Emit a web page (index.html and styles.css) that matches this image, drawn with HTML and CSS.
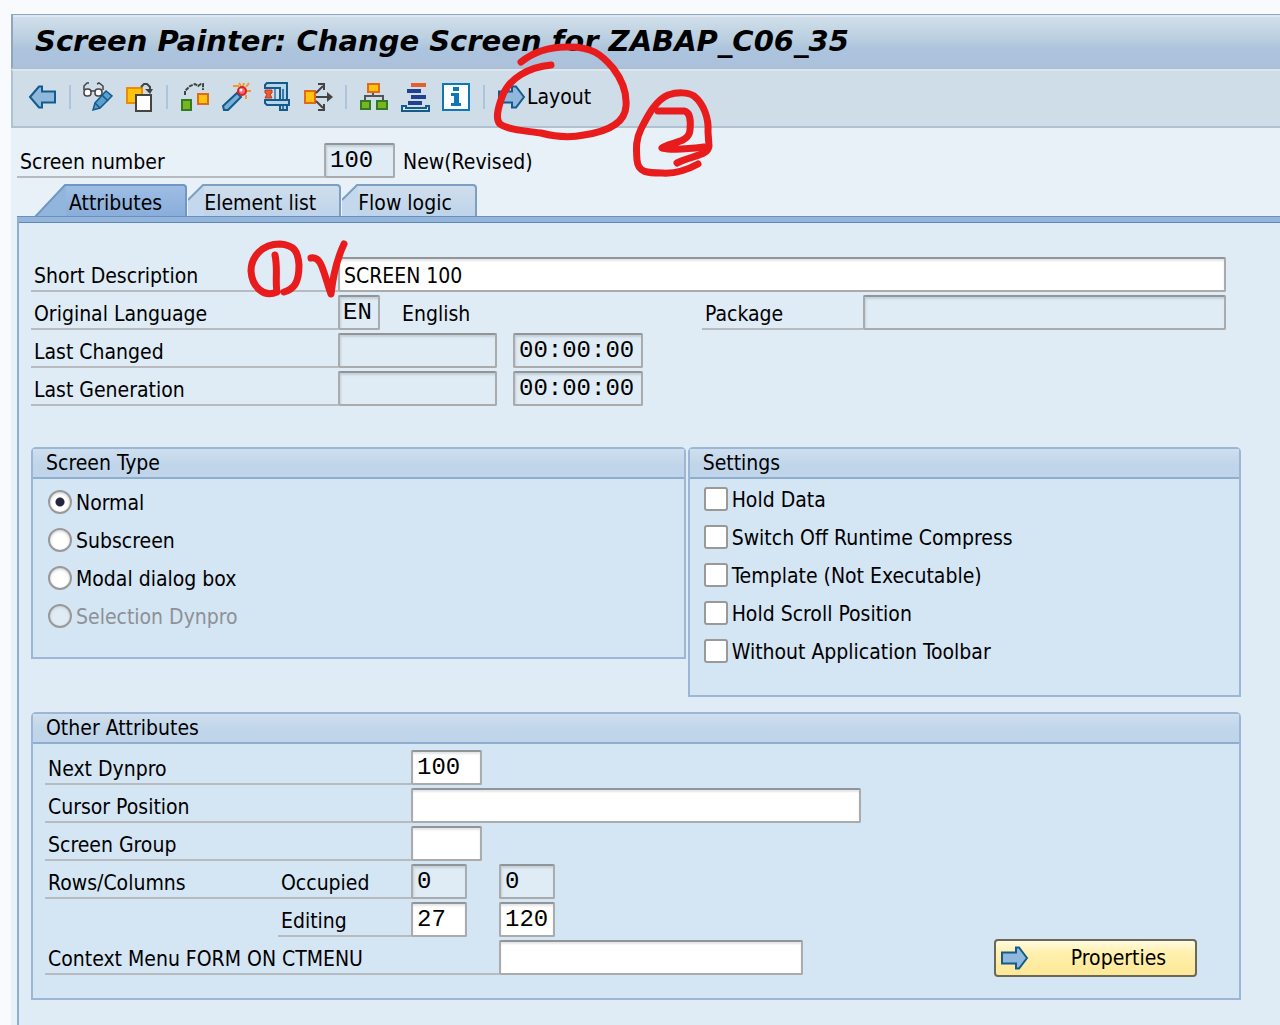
FILE: index.html
```html
<!DOCTYPE html>
<html lang="en">
<head>
    <meta charset="utf-8">
    <title>Screen Painter: Change Screen for ZABAP_C06_35</title>
    <link rel="stylesheet" href="styles.css">
</head>
<body>
    <div class="window">
        <header class="title-bar">
            <h1>Screen Painter: Change Screen for ZABAP_C06_35</h1>
        </header>

        <div class="toolbar">
            <button type="button" class="tool" aria-label="Back">
                <svg width="30" height="30" viewBox="0 0 30 30"><path d="M3 15L12 4.500H15V9.500H28V20.500H15V25.500H12Z" fill="#8fb8dc" stroke="#125b8c" stroke-width="2"/></svg>
            </button>
            <span class="sep"></span>
            <button type="button" class="tool" aria-label="Display / Change">
                <svg width="30" height="30" viewBox="0 0 30 30">
                    <g fill="#fff" stroke="#444" stroke-width="1.500"><path d="M1 8V4L4 1H6M14 2L16 1L20 4V8" fill="none"/><rect x="1" y="7" width="7" height="7" rx="3"/><rect x="12" y="7" width="7" height="7" rx="3"/><path d="M8 9H12" fill="none"/></g>
                    <path d="M10 28L12 21L23 9L29 14L17 26Z" fill="#5b9fcf" stroke="#125b8c" stroke-width="1.500"/><path d="M12 21L17 26M19 13L25 19" stroke="#125b8c" stroke-width="1.500"/>
                </svg>
            </button>
            <button type="button" class="tool" aria-label="Other object">
                <svg width="30" height="30" viewBox="0 0 30 30">
                    <rect x="3" y="6" width="15" height="15" fill="#ffc20e" stroke="#f08a00" stroke-width="2"/>
                    <rect x="12" y="13" width="15" height="16" fill="#fff" stroke="#444" stroke-width="2"/>
                    <path d="M17 5L20 2H23L26 5V10" fill="none" stroke="#444" stroke-width="2"/><path d="M21 7L26 12L29 7Z" fill="#444"/>
                </svg>
            </button>
            <span class="sep"></span>
            <button type="button" class="tool" aria-label="Activate sequence">
                <svg width="30" height="30" viewBox="0 0 30 30">
                    <rect x="2" y="18" width="9" height="10" fill="#7ab51d" stroke="#317a28" stroke-width="2"/>
                    <rect x="18" y="12" width="10" height="10" fill="#ffc20e" stroke="#e06a1c" stroke-width="2"/>
                    <path d="M5 13V9L10 4L15 2L18 4L21 2H23V8" fill="none" stroke="#444" stroke-width="2" stroke-dasharray="4 1"/>
                </svg>
            </button>
            <button type="button" class="tool" aria-label="Wizard">
                <svg width="30" height="30" viewBox="0 0 30 30">
                    <path d="M2 24L16 11L20 15L7 28H3Z" fill="#78aed7" stroke="#125b8c" stroke-width="2"/>
                    <path d="M12 4H18M18 1L20 4M23 1L22 4M28 1L25 5M25 9H30M25 13V17" stroke="#f59a1c" stroke-width="2"/>
                    <circle cx="21" cy="9" r="4" fill="#f26a6a" stroke="#d6202a" stroke-width="2"/><circle cx="20" cy="8" r="1.500" fill="#fff"/>
                </svg>
            </button>
            <button type="button" class="tool" aria-label="Check">
                <svg width="30" height="30" viewBox="0 0 30 30">
                    <path d="M3 3L5 1H25V28H18V6H3Z" fill="#b9d3e8" stroke="#125b8c" stroke-width="2"/>
                    <path d="M21 7V28" stroke="#125b8c" stroke-width="1.500"/>
                    <path d="M3 18H27V23H5L3 21Z" fill="#b9d3e8" stroke="#125b8c" stroke-width="2"/>
                    <path d="M3 8H10V11L8 12L10 16H3L5 12L3 11Z" fill="#e2622a" stroke="#c9302c"/><path d="M13 7V17" stroke="#5b8fb5" stroke-width="2"/>
                </svg>
            </button>
            <button type="button" class="tool" aria-label="Where-used list">
                <svg width="30" height="30" viewBox="0 0 30 30">
                    <rect x="2" y="9" width="10" height="12" fill="#ffc20e" stroke="#e06a1c" stroke-width="2"/>
                    <path d="M13 15H25M13 11L20 4M13 19L20 26" fill="none" stroke="#444" stroke-width="2"/>
                    <path d="M24 10L30 15L24 20Z" fill="#444"/><path d="M15 2H21V8M15 28H21V22" fill="none" stroke="#444" stroke-width="2"/>
                </svg>
            </button>
            <span class="sep"></span>
            <button type="button" class="tool" aria-label="Object hierarchy">
                <svg width="30" height="30" viewBox="0 0 30 30">
                    <rect x="9" y="2" width="11" height="8" fill="#ffc20e" stroke="#e06a1c" stroke-width="2"/>
                    <path d="M14 11V14M6 18V14H24V18" fill="none" stroke="#555" stroke-width="2"/>
                    <rect x="2" y="19" width="9" height="8" fill="#7ab51d" stroke="#317a28" stroke-width="2"/><rect x="18" y="19" width="10" height="8" fill="#7ab51d" stroke="#317a28" stroke-width="2"/>
                </svg>
            </button>
            <button type="button" class="tool" aria-label="Navigation stack">
                <svg width="30" height="30" viewBox="0 0 30 30">
                    <path d="M11 3H26" stroke="#e0612a" stroke-width="4"/>
                    <path d="M7 9H21M11 15H26M8 21H22" stroke="#1f4290" stroke-width="4"/>
                    <path d="M2 24H6V26H26V24H29V29H2Z" fill="#d4e5f2" stroke="#125b8c" stroke-width="2"/>
                </svg>
            </button>
            <button type="button" class="tool" aria-label="Help">
                <svg width="30" height="30" viewBox="0 0 30 30">
                    <rect x="2" y="2" width="26" height="26" fill="#fff" stroke="#0c78b8" stroke-width="2"/>
                    <path d="M12 5H18V9H12ZM10 11H18V21H20V24H10V21H13V14H10Z" fill="#0c78b8"/>
                </svg>
            </button>
            <span class="sep"></span>
            <button type="button" class="tool layout-btn">
                <svg width="30" height="30" viewBox="0 0 30 30"><path d="M27 15L19 4.500H15V9.500H2V20.500H15V25.500H19Z" fill="#8fb8dc" stroke="#125b8c" stroke-width="2"/></svg>
                Layout
            </button>
        </div>

        <main class="content">
            <div class="row screen-row">
                <label class="name" for="screen-number">Screen number</label>
                <input class="field mono w-70" id="screen-number" type="text" value="100" readonly>
                <span class="value">New(Revised)</span>
            </div>

            <div class="tabs" role="tablist">
                <button type="button" class="tab active" role="tab" aria-selected="true">
                    <svg width="32" height="34" viewBox="0 0 32 34"><path d="M0 34L31 1H32V34Z" fill="#92b5de"/><path d="M0 34L31 1H32" fill="none" stroke="#6f97c3" stroke-width="2"/></svg>
                    <span>Attributes</span>
                </button>
                <button type="button" class="tab" role="tab" aria-selected="false">
                    <svg width="16" height="34" viewBox="0 0 16 34"><path d="M0 16L15 1H16V34H0Z" fill="#c3d8ec"/><path d="M0 16L15 1H16" fill="none" stroke="#7f9fc0" stroke-width="2"/></svg>
                    <span>Element list</span>
                </button>
                <button type="button" class="tab" role="tab" aria-selected="false">
                    <svg width="16" height="34" viewBox="0 0 16 34"><path d="M0 16L15 1H16V34H0Z" fill="#c3d8ec"/><path d="M0 16L15 1H16" fill="none" stroke="#7f9fc0" stroke-width="2"/></svg>
                    <span>Flow logic</span>
                </button>
            </div>

            <section class="panel" role="tabpanel">
                <div class="rows header-rows">
                    <div class="row">
                        <label class="name" for="short-desc">Short Description</label>
                        <input class="field grow" id="short-desc" type="text" value="SCREEN 100">
                    </div>
                    <div class="row">
                        <label class="name" for="language">Original Language</label>
                        <input class="field mono w-42" id="language" type="text" value="EN" readonly>
                        <span class="value language-name">English</span>
                        <div class="row package">
                            <label class="name" for="package">Package</label>
                            <input class="field grow" id="package" type="text" readonly>
                        </div>
                    </div>
                    <div class="row">
                        <label class="name" for="changed-date">Last Changed</label>
                        <input class="field mono w-160" id="changed-date" type="text" readonly>
                        <input class="field mono w-130" type="text" value="00:00:00" aria-label="Last changed time" readonly>
                    </div>
                    <div class="row">
                        <label class="name" for="generated-date">Last Generation</label>
                        <input class="field mono w-160" id="generated-date" type="text" readonly>
                        <input class="field mono w-130" type="text" value="00:00:00" aria-label="Last generation time" readonly>
                    </div>
                </div>

                <div class="groups">
                    <section class="group screen-type">
                        <h2>Screen Type</h2>
                        <div class="options radios">
                            <label><input type="radio" name="screen-type" checked>Normal</label>
                            <label><input type="radio" name="screen-type">Subscreen</label>
                            <label><input type="radio" name="screen-type">Modal dialog box</label>
                            <label class="disabled"><input type="radio" name="screen-type" disabled>Selection Dynpro</label>
                        </div>
                    </section>
                    <section class="group settings">
                        <h2>Settings</h2>
                        <div class="options">
                            <label><input type="checkbox">Hold Data</label>
                            <label><input type="checkbox">Switch Off Runtime Compress</label>
                            <label><input type="checkbox">Template (Not Executable)</label>
                            <label><input type="checkbox">Hold Scroll Position</label>
                            <label><input type="checkbox">Without Application Toolbar</label>
                        </div>
                    </section>
                </div>

                <section class="group">
                    <h2>Other Attributes</h2>
                    <div class="rows other-rows">
                        <div class="row">
                            <label class="name" for="next-dynpro">Next Dynpro</label>
                            <input class="field mono w-70" id="next-dynpro" type="text" value="100">
                        </div>
                        <div class="row">
                            <label class="name" for="cursor-pos">Cursor Position</label>
                            <input class="field mono w-450" id="cursor-pos" type="text">
                        </div>
                        <div class="row">
                            <label class="name" for="screen-group">Screen Group</label>
                            <input class="field mono w-70" id="screen-group" type="text">
                        </div>
                        <div class="row pair">
                            <span class="name half">Rows/Columns</span>
                            <label class="name sub" for="occ-rows">Occupied</label>
                            <input class="field mono w-56" id="occ-rows" type="text" value="0" readonly>
                            <input class="field mono w-56" type="text" value="0" aria-label="Occupied columns" readonly>
                        </div>
                        <div class="row pair">
                            <span class="half"></span>
                            <label class="name sub" for="edit-rows">Editing</label>
                            <input class="field mono w-56" id="edit-rows" type="text" value="27">
                            <input class="field mono w-56" type="text" value="120" aria-label="Editing columns">
                        </div>
                        <div class="row">
                            <label class="name wide" for="context-menu">Context Menu FORM ON CTMENU</label>
                            <input class="field mono w-304" id="context-menu" type="text">
                            <button type="button" class="properties">
                                <svg width="30" height="30" viewBox="0 0 30 30"><path d="M27 15L19 4.500H16V9.500H2V20.500H16V25.500H19Z" fill="#8fb8dc" stroke="#125b8c" stroke-width="2"/></svg>
                                <span>Properties</span>
                            </button>
                        </div>
                    </div>
                </section>
            </section>
        </main>

        <!-- pen marks: step 1 and step 2 -->
        <svg class="marks" width="720" height="300" viewBox="0 0 720 300">
            <path d="M521 62C535 51 550 47 566 47C592 46 602 55 613 68C623 81 627 93 626 106C625 125 604 132 584 135C570 138 556 137 541 133C527 131 508 130 500 124C495 119 498 108 502 97C509 78 529 67 551 65"/>
            <path d="M698 164C687 170 675 174 662 173C648 173 638 173 637 160C636 147 636 139 641 129C648 115 656 100 668 95C677 92 688 92 694 96C704 104 709 119 708 132L709 146C708 156 693 155 677 163"/>
            <path d="M658 111H684C690 112 691 121 690 130C689 144 668 142 662 148C671 150 688 149 704 147"/>
            <path d="M275 255C278 269 275 281 277 292C264 298 252 287 251 271C251 257 262 244 280 244C294 245 298 251 299 265C299 283 294 289 284 292"/>
            <path d="M311 258C322 256 323 272 331 294C333 276 336 261 344 244"/>
        </svg>
    </div>
</body>
</html>
```

FILE: styles.css
```css
* {
    box-sizing: border-box;
}
body {
    margin: 0;
    padding: 14px 0 0 11px;
    min-height: 100vh;
    display: flex;
    background: #f9fafd;
    color: #000;
    font-family: "DejaVu Sans Condensed", "DejaVu Sans", sans-serif;
    font-size: 21px;
    line-height: 28px;
}
button, input {
    font: inherit;
    color: inherit;
}
svg {
    display: block;
    flex: none;
}
.window {
    flex: 1;
    min-width: 0;
    display: flex;
    flex-direction: column;
    background: #e8f0f8;
}
.title-bar {
    padding: 8px 22px;
    border: 1px solid #8ea6c0;
    border-width: 1px 0 2px 2px;
    border-bottom-color: #adbfd1;
    background: linear-gradient(#d3e0ec, #bacfdf 45%, #adc4dd 65%, #abc1dc);
    box-shadow: inset 0 2px #dfe8f2;
}
h1 {
    margin: 0;
    font-family: "DejaVu Sans", sans-serif;
    font-size: 29px;
    line-height: 36px;
    font-style: italic;
    font-weight: bold;
    white-space: nowrap;
}

/* toolbar */
.toolbar {
    display: flex;
    align-items: center;
    gap: 11px;
    height: 59px;
    padding: 0 14px 4px;
    background: #cfdde8;
    border: 2px solid #b0c1d1;
    border-top-color: #dbe6f0;
    border-right: 0;
}
.tool {
    display: flex;
    align-items: center;
    padding: 0;
    border: 0;
    background: none;
}
.sep {
    width: 2px;
    height: 24px;
    margin: 0 1px;
    background: #adc4dd;
}

/* fields */
.content {
    flex: 1;
    display: flex;
    flex-direction: column;
    padding: 15px 0 0 6px;
}
.rows {
    display: flex;
    flex-direction: column;
    gap: 3px;
}
.row {
    display: flex;
    align-items: center;
}
.name {
    flex: none;
    width: 307px;
    height: 35px;
    padding: 5px 0 0 3px;
    border-bottom: 2px solid #b7bbbf;
    white-space: nowrap;
}
.field {
    height: 35px;
    min-width: 0;
    padding: 2px 4px 0;
    border: 2px solid #a9abad;
    border-top-color: #929598;
    border-radius: 2px;
    background: #fff;
    box-shadow: inset 0 2px 2px #e3e5e8;
}
.field[readonly] {
    background: #dfebf5;
    box-shadow: inset 1px 2px 2px #c5d0d8;
}
.mono {
    padding-bottom: 2px;
    font-family: "Liberation Mono", monospace;
    font-size: 24px;
}
.grow { flex: 1; }
.w-42 { width: 42px; padding-left: 3px; padding-right: 0; }
.w-56 { width: 56px; }
.w-70 { width: 71px; }
.w-130 { width: 130px; margin-left: 16px; }
.w-160 { width: 159px; }
.w-304 { width: 304px; }
.w-450 { width: 450px; }
.value {
    padding: 3px 0 0 8px;
}
.language-name {
    padding-left: 22px;
}
.package {
    width: 524px;
    margin-left: auto;
}
.package .name {
    width: 161px;
}

/* tabs */
.tabs {
    display: flex;
    gap: 1px;
    margin-top: 6px;
    padding-left: 17px;
}
.tab {
    display: flex;
    padding: 0;
    border: 0;
    background: none;
}
.tab span {
    height: 34px;
    padding: 3px 23px 0 0;
    border: 2px solid #7f9fc0;
    border-width: 2px 2px 0 0;
    border-radius: 0 4px 0 0;
    background: linear-gradient(#cfdeed, #bdd3ea);
}
.tab.active span {
    padding-left: 3px;
    border-color: #6f97c3;
    background: linear-gradient(#9dbde3, #88addb);
}
.panel {
    flex: 1;
    padding: 35px 39px 24px 12px;
    border-top: 5px solid #94b5dc;
    border-left: 2px solid #8eaed2;
    background: #dfebf5;
    box-shadow: 0 -1px #6a8fba, inset 0 1px #5f88b8;
    margin-top: -1px;
}
.header-rows {
    margin-right: 15px;
}

/* groups */
.groups {
    display: flex;
    align-items: flex-start;
    gap: 2px;
    margin: 41px 0 15px;
}
.group {
    border: 2px solid #9cb7d5;
    border-radius: 5px 5px 0 0;
    background: #d4e5f4;
}
h2 {
    margin: 0;
    height: 30px;
    padding: 0 13px;
    border-bottom: 2px solid #8fadcd;
    background: linear-gradient(#cedfee, #c0d5ea 60%);
    font-size: 21px;
    line-height: 28px;
    font-weight: normal;
}
.screen-type {
    flex: 655;
}
.settings {
    flex: 553;
}
.options {
    display: flex;
    flex-direction: column;
    gap: 10px;
    padding: 7px 14px 29px;
}
.radios {
    padding: 10px 15px 26px;
}
.options label {
    display: flex;
    align-items: center;
    gap: 4px;
}
.options input {
    appearance: none;
    flex: none;
    width: 24px;
    height: 24px;
    margin: 0 0 2px;
    border: 2px solid #999;
    border-radius: 3px;
    background: #fff;
}
.options input[type="radio"] {
    border-radius: 50%;
    box-shadow: inset 0 1px 3px #ccc;
}
.options input[type="radio"]:checked {
    background: radial-gradient(circle, #25263f 4px, #fff 5px);
}
.options .disabled {
    color: #8d9196;
}
.options input:disabled {
    background: #dfebf5;
}
.other-rows {
    padding: 6px 42px 23px 12px;
}
.other-rows .name {
    width: 366px;
}
.other-rows .half {
    width: 233px;
}
.other-rows .sub {
    width: 133px;
}
.other-rows .wide {
    width: 454px;
}
.pair .field + .field {
    margin-left: 32px;
}
.properties {
    display: flex;
    align-items: center;
    width: 203px;
    height: 38px;
    margin: -1px 0 -2px auto;
    padding: 0 4px;
    border: 2px solid #6b6858;
    border-radius: 4px;
    background: linear-gradient(#fffbe0, #fff0ae 35%, #fee896);
}
.properties span {
    flex: 1;
    padding-left: 16px;
}

.marks {
    position: absolute;
    top: 0;
    left: 0;
    pointer-events: none;
    fill: none;
    stroke: #e81c1c;
    stroke-width: 7;
    stroke-linecap: round;
    stroke-linejoin: round;
}
```
